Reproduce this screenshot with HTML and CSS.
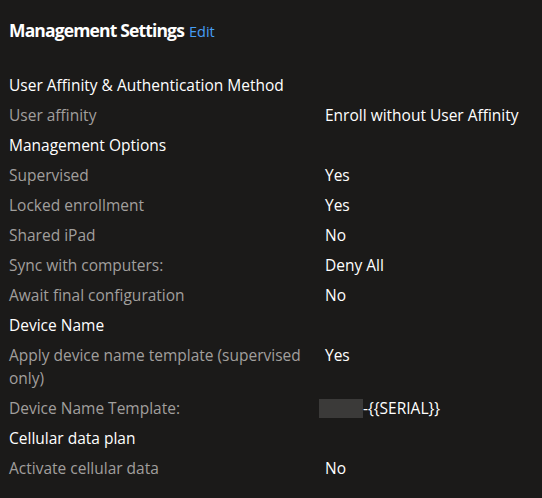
FILE: index.html
```html
<!DOCTYPE html>
<html lang="en">
<head>
    <meta charset="UTF-8">
    <title>Management Settings</title>
    <link rel="stylesheet" href="styles.css">
</head>
<body>
    <div class="panel">
        <div class="header">
            <h2>Management Settings</h2>
            <a href="#" class="edit">Edit</a>
        </div>

        <div class="section">User Affinity &amp; Authentication Method</div>
        <div class="row">
            <div class="label">User affinity</div>
            <div class="value">Enroll without User Affinity</div>
        </div>

        <div class="section">Management Options</div>
        <div class="row">
            <div class="label">Supervised</div>
            <div class="value">Yes</div>
        </div>
        <div class="row">
            <div class="label">Locked enrollment</div>
            <div class="value">Yes</div>
        </div>
        <div class="row">
            <div class="label">Shared iPad</div>
            <div class="value">No</div>
        </div>
        <div class="row">
            <div class="label">Sync with computers:</div>
            <div class="value">Deny All</div>
        </div>
        <div class="row">
            <div class="label">Await final configuration</div>
            <div class="value">No</div>
        </div>

        <div class="section">Device Name</div>
        <div class="row">
            <div class="label">Apply device name template (supervised only)</div>
            <div class="value">Yes</div>
        </div>
        <div class="row">
            <div class="label">Device Name Template:</div>
            <div class="value template"><span class="redacted"></span>-{{SERIAL}}</div>
        </div>

        <div class="section">Cellular data plan</div>
        <div class="row">
            <div class="label">Activate cellular data</div>
            <div class="value">No</div>
        </div>
    </div>
</body>
</html>
```

FILE: styles.css
```css
body {
    margin: 0;
    padding: 0;
    background-color: #1b1a19;
    font-family: "Open Sans", "Noto Sans", sans-serif;
    font-size: 15.5px;
    color: #f3f2f1;
}

.panel {
    padding: 16px 9px 0 9px;
}

.header {
    display: flex;
    align-items: baseline;
    gap: 5px;
    margin-bottom: 26px;
}

.header h2 {
    margin: 0;
    font-size: 17.5px;
    font-weight: 700;
    letter-spacing: -0.85px;
    color: #ffffff;
    line-height: 28px;
}

.edit {
    color: #479ef5;
    text-decoration: none;
    font-size: 14.5px;
}

.section,
.row {
    line-height: 23px;
    padding: 3.5px 0;
}

.section {
    color: #ffffff;
}

.row {
    display: grid;
    grid-template-columns: 300px 1fr;
    column-gap: 16px;
}

.label {
    color: #a19f9d;
}

.value {
    color: #ffffff;
}

.template {
    display: flex;
    align-items: center;
    margin-left: -6px;
}

.redacted {
    display: inline-block;
    width: 44px;
    height: 19px;
    background: #3b3a39;
}
```
